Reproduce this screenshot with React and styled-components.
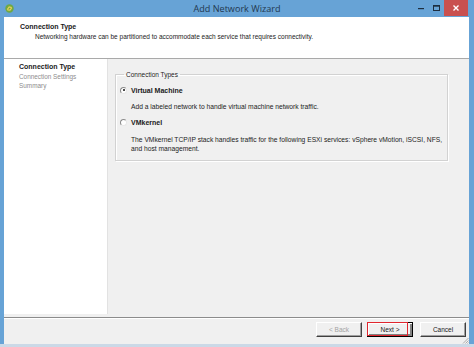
import React from "react";
import styled, { createGlobalStyle } from "styled-components";

const Global = createGlobalStyle`
  html, body { margin: 0; padding: 0; }
  body {
    width: 474px; height: 347px; overflow: hidden;
    font-family: "Liberation Sans", Arial, sans-serif;
    -webkit-font-smoothing: antialiased;
  }
  * { box-sizing: border-box; }
`;

const Window = styled.div`
  width: 474px;
  height: 347px;
  display: flex;
  flex-direction: column;
  background: #67a3d6;
  border-bottom: 3px solid #cbd9e7;
`;

const TitleBar = styled.div`
  height: 17px;
  flex: none;
  display: grid;
  grid-template-columns: 1fr auto 1fr;
  align-items: center;
`;

const AppIcon = styled.div`
  padding-left: 5px;
  display: flex;
  align-items: center;
`;

const Title = styled.div`
  font-family: "Open Sans", "Liberation Sans", sans-serif;
  font-size: 9.1px;
  color: #23384f;
`;

const Controls = styled.div`
  justify-self: end;
  align-self: start;
  display: flex;
  align-items: flex-start;
  padding-right: 6px;
`;

const CtrlBtn = styled.div`
  width: ${(p) => p.$w}px;
  height: 16px;
  display: flex;
  align-items: center;
  justify-content: center;
  background: ${(p) => (p.$close ? "#c9504f" : "transparent")};
`;

const Body = styled.div`
  flex: 1;
  margin: 0 5px 0 4px;
  display: flex;
  flex-direction: column;
  background: #f0f0f0;
`;

const Header = styled.div`
  height: 42px;
  flex: none;
  background: #ffffff;
  border-bottom: 1px solid #a9a9a9;
  padding: 5px 0 0 16px;
`;

const HeaderTitle = styled.div`
  font-size: 7px;
  font-weight: bold;
  line-height: 9px;
  color: #1a1a1a;
`;

const HeaderSub = styled.div`
  font-size: 6.5px;
  line-height: 9px;
  color: #222;
  padding-left: 15px;
  margin-top: 1px;
`;

const Main = styled.div`
  flex: 1;
  display: flex;
  min-height: 0;
`;

const Nav = styled.div`
  width: 104px;
  flex: none;
  background: #ffffff;
  border-right: 1px solid #e2e2e2;
  margin-bottom: 3px;
  padding: 3px 0 0 15px;
`;

const NavItem = styled.div`
  font-size: ${(p) => (p.$active ? "7px" : "6.4px")};
  font-weight: ${(p) => (p.$active ? "bold" : "normal")};
  color: ${(p) => (p.$active ? "#1a1a1a" : "#8d8d8d")};
  line-height: 9.5px;
`;

const Content = styled.div`
  flex: 1;
  padding: 11px 21px 0 7px;
`;

const GroupBox = styled.fieldset`
  margin: 0;
  padding: 0 0 7px 4px;
  border: 1px solid #d2d2d2;
  box-shadow: inset 1px 1px 0 #ffffff, 1px 1px 0 #ffffff;
  min-width: 0;
`;

const Legend = styled.legend`
  font-size: 6.5px;
  line-height: 9px;
  color: #222;
  padding: 0 2px;
  margin-left: 4px;
`;

const Option = styled.div`
  margin-top: ${(p) => p.$mt}px;
`;

const RadioRow = styled.div`
  display: flex;
  align-items: center;
  gap: 4px;
  height: 10px;
`;

const Radio = styled.span`
  width: 7px;
  height: 7px;
  border-radius: 50%;
  border: 1px solid;
  border-color: #8a8a8a #e8e8e8 #e8e8e8 #8a8a8a;
  background: #ffffff;
  display: flex;
  align-items: center;
  justify-content: center;
  &::after {
    content: "";
    width: 2px;
    height: 2px;
    border-radius: 50%;
    background: ${(p) => (p.$checked ? "#111" : "transparent")};
  }
`;

const OptionLabel = styled.span`
  font-size: 7px;
  font-weight: bold;
  color: #1a1a1a;
`;

const Desc = styled.div`
  font-size: 6.7px;
  line-height: 9px;
  color: #222;
  white-space: nowrap;
  padding-left: 11px;
  margin-top: ${(p) => p.$mt}px;
`;

const Footer = styled.div`
  height: 27px;
  flex: none;
  border-top: 1px solid #8c8c8c;
  box-shadow: inset 0 1px 0 #ffffff;
  display: flex;
  justify-content: flex-end;
  align-items: flex-start;
  padding: 4px 3px 0 0;
  position: relative;
`;

const Button = styled.div`
  position: relative;
  width: 46px;
  height: 15px;
  margin-left: ${(p) => p.$ml}px;
  display: flex;
  align-items: center;
  justify-content: center;
  font-size: 6.5px;
  color: ${(p) => (p.$disabled ? "#a3a3a3" : "#1a1a1a")};
  background: #f0f0f0;
  border: 1px solid;
  border-color: ${(p) =>
    p.$default ? "#000 #000 #000 #000" : "#ffffff #404040 #404040 #ffffff"};
  box-shadow: ${(p) =>
    p.$default
      ? "inset 1px 1px 0 #fff, inset -2px -2px 0 #808080"
      : "inset -1px -1px 0 #a0a0a0"};
`;

const Highlight = styled.span`
  position: absolute;
  left: -1px;
  top: -1px;
  right: 4px;
  bottom: 0;
  border: 1.5px solid #e0262e;
`;

const Grip = styled.svg`
  position: absolute;
  right: 0;
  bottom: 0;
`;

export default function App() {
  return (
    <>
      <Global />
      <Window>
        <TitleBar>
          <AppIcon>
            <svg width="9" height="9" viewBox="0 0 9 9">
              <circle cx="4.5" cy="4.5" r="4.2" fill="#6fa845" />
              <path d="M2.2 5.6 L4.2 3 L6.8 3.6 M2.4 5.8 L5 6.2 L6.7 3.8" stroke="#e8d25a" strokeWidth="1.2" fill="none" />
            </svg>
          </AppIcon>
          <Title>Add Network Wizard</Title>
          <Controls>
            <CtrlBtn $w={14}>
              <svg width="6" height="6" viewBox="0 0 6 6">
                <rect x="0" y="3" width="6" height="1.2" fill="#1d2e40" />
              </svg>
            </CtrlBtn>
            <CtrlBtn $w={16}>
              <svg width="7" height="6" viewBox="0 0 7 6">
                <rect x="0.5" y="0.5" width="6" height="5" fill="none" stroke="#1d2e40" strokeWidth="1" />
                <rect x="0.5" y="0.5" width="6" height="1.2" fill="#1d2e40" />
              </svg>
            </CtrlBtn>
            <CtrlBtn $w={24} $close>
              <svg width="6" height="6" viewBox="0 0 6 6">
                <path d="M0.5 0.5 L5.5 5.5 M5.5 0.5 L0.5 5.5" stroke="#ffffff" strokeWidth="1.4" />
              </svg>
            </CtrlBtn>
          </Controls>
        </TitleBar>
        <Body>
          <Header>
            <HeaderTitle>Connection Type</HeaderTitle>
            <HeaderSub>
              Networking hardware can be partitioned to accommodate each service that requires connectivity.
            </HeaderSub>
          </Header>
          <Main>
            <Nav>
              <NavItem $active>Connection Type</NavItem>
              <NavItem>Connection Settings</NavItem>
              <NavItem>Summary</NavItem>
            </Nav>
            <Content>
              <GroupBox>
                <Legend>Connection Types</Legend>
                <Option $mt={6}>
                  <RadioRow>
                    <Radio $checked />
                    <OptionLabel>Virtual Machine</OptionLabel>
                  </RadioRow>
                  <Desc $mt={7}>Add a labeled network to handle virtual machine network traffic.</Desc>
                </Option>
                <Option $mt={6}>
                  <RadioRow>
                    <Radio />
                    <OptionLabel>VMkernel</OptionLabel>
                  </RadioRow>
                  <Desc $mt={8}>
                    The VMkernel TCP/IP stack handles traffic for the following ESXi services: vSphere vMotion, iSCSI, NFS,
                    <br />
                    and host management.
                  </Desc>
                </Option>
              </GroupBox>
            </Content>
          </Main>
          <Footer>
            <Button $disabled>&lt; Back</Button>
            <Button $default $ml={5}>
              Next &gt;
              <Highlight />
            </Button>
            <Button $ml={7}>Cancel</Button>
            <Grip width="7" height="7" viewBox="0 0 7 7">
              <path d="M6.5 1 L1 6.5 M6.5 3.5 L3.5 6.5 M6.5 5.5 L5.5 6.5" stroke="#9a9a9a" strokeWidth="0.8" />
            </Grip>
          </Footer>
        </Body>
      </Window>
    </>
  );
}
